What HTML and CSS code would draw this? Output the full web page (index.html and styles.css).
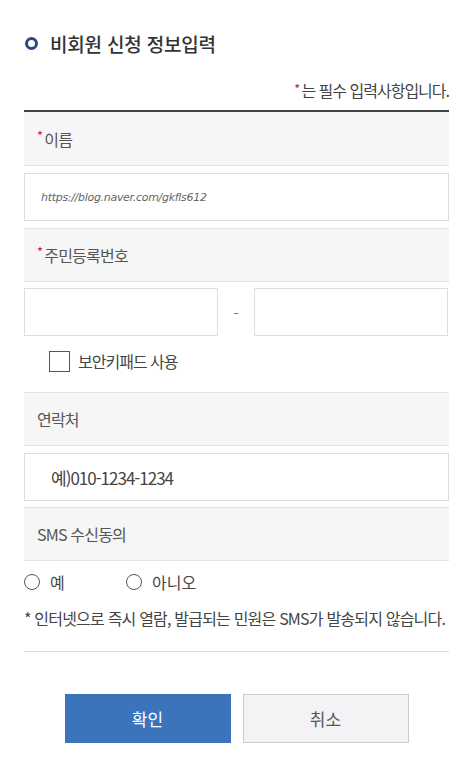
FILE: index.html
```html
<!DOCTYPE html>
<html lang="ko">
<head>
<meta charset="utf-8">
<link rel="stylesheet" href="styles.css">
</head>
<body>
<div class="page">
  <h1 class="title"><span class="ring"></span>비회원 신청 정보입력</h1>
  <p class="req-note"><span class="star">*</span>는 필수 입력사항입니다.</p>
  <div class="form">
    <div class="label-row first"><span class="star">*</span>이름</div>
    <div class="field"><span class="hand">https://blog.naver.com/gkfls612</span></div>

    <div class="label-row"><span class="star">*</span>주민등록번호</div>
    <div class="split">
      <div class="field half"></div>
      <span class="dash">-</span>
      <div class="field half"></div>
    </div>
    <label class="check"><span class="box"></span>보안키패드 사용</label>

    <div class="label-row">연락처</div>
    <div class="field"><span class="ph">예)010-1234-1234</span></div>

    <div class="label-row">SMS 수신동의</div>
    <div class="radios">
      <label class="radio"><span class="dot"></span>예</label>
      <label class="radio"><span class="dot"></span>아니오</label>
    </div>
    <p class="notice">* 인터넷으로 즉시 열람, 발급되는 민원은 SMS가 발송되지 않습니다.</p>
  </div>
  <div class="buttons">
    <div class="btn ok">확인</div>
    <div class="btn cancel">취소</div>
  </div>
</div>
</body>
</html>
```
FILE: styles.css
```css
* { box-sizing: border-box; }
html, body { margin: 0; padding: 0; background: #fff; }
body {
  font-family: "Noto Sans CJK KR", "Noto Sans", sans-serif;
  color: #555;
}
.page { padding: 31px 25px 0 24px; }
.title {
  display: flex;
  align-items: center;
  margin: 0;
  height: 24px;
  font-size: 19px;
  font-weight: 500;
  color: #333;
  letter-spacing: -0.2px;
}
.ring {
  width: 13px;
  height: 13px;
  border: 3px solid #2b4a7c;
  border-radius: 50%;
  margin: 0 12px 0 1px;
}
.req-note {
  margin: 25px 0 0;
  height: 20px;
  line-height: 20px;
  text-align: right;
  font-size: 16px;
  color: #444;
  letter-spacing: -1px;
}
.star { color: #c8234a; margin-right: 2px; font-size: 13px; vertical-align: top; line-height: 18px; }
.form { margin-top: 10px; border-bottom: 1px solid #ddd; padding-bottom: 22px; }
.label-row {
  height: 54px;
  background: #f6f6f6;
  border-top: 1px solid #e2e2e2;
  border-bottom: 1px solid #e2e2e2;
  display: flex;
  align-items: center;
  padding-left: 13px;
  font-size: 16px;
  color: #555;
  letter-spacing: -0.8px;
}
.label-row .star { margin-top: -6px; }
.label-row.first { border-top: 2px solid #444; height: 56px; }
.field {
  height: 48px;
  border: 1px solid #ddd;
  margin: 7px 0 6px;
  display: flex;
  align-items: center;
  padding-left: 16px;
}
.label-row.first + .field { margin-bottom: 7px; }
.hand {
  font-family: "DejaVu Sans", sans-serif;
  font-size: 11px;
  color: #666;
  letter-spacing: -0.3px;
  font-style: italic;
}
.ph { font-size: 17px; color: #444; letter-spacing: -1px; padding-left: 10px; }
.split { display: flex; align-items: center; margin: 6px 0 0; }
.split .field { margin: 0; }
.half { width: 194px; }
.dash { width: 36px; text-align: center; color: #777; font-size: 15px; }
.check {
  display: flex;
  align-items: center;
  height: 22px;
  margin: 14px 0 20px 25px;
  font-size: 16px;
  color: #444;
  letter-spacing: -1px;
}
.box {
  width: 21px;
  height: 21px;
  border: 1.5px solid #555;
  margin-right: 8px;
}
.radios { display: flex; height: 22px; margin-top: 10px; align-items: center; }
.radio {
  display: flex;
  align-items: center;
  width: 102px;
  font-size: 16px;
  color: #444;
}
.dot {
  width: 16px;
  height: 16px;
  border: 1.3px solid #555;
  border-radius: 50%;
  margin-right: 10px;
}
.notice {
  margin: 14px 0 0;
  height: 22px;
  line-height: 22px;
  font-size: 16px;
  color: #444;
  letter-spacing: -0.8px;
}
.buttons {
  display: flex;
  justify-content: center;
  gap: 12px;
  margin-top: 42px;
}
.btn {
  width: 166px;
  height: 49px;
  display: flex;
  align-items: center;
  justify-content: center;
  font-size: 17px;
}
.ok { background: #3c74bb; color: #fff; }
.cancel { background: #f3f3f5; border: 1px solid #ccc; color: #555; }
```
